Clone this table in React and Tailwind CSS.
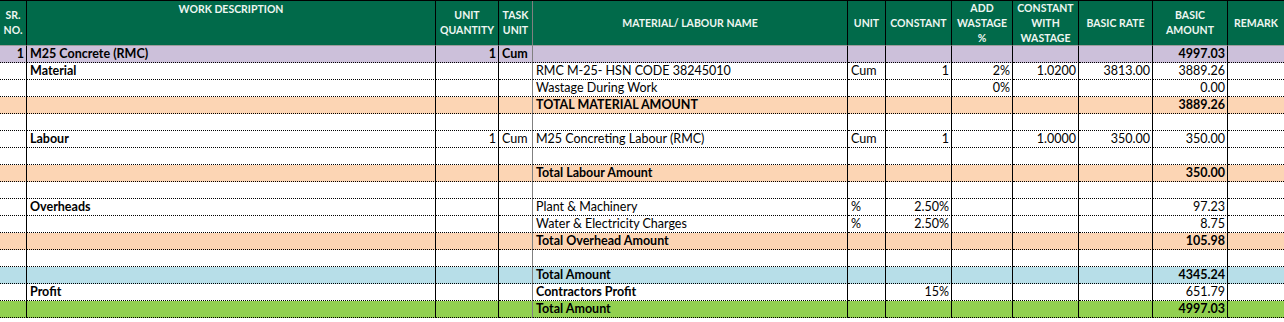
import React from "react";

// Column layout: widths taken from the sheet grid
const COLS = "grid-cols-[27px_409px_63px_34px_315px_38px_66px_61px_66px_74px_75px_1fr]";

// alignment per column
const ALIGN = ["r", "l", "r", "l", "l", "l", "r", "r", "r", "r", "r", "l"];

const HEADERS = [
  ["SR.", "NO."],
  ["WORK DESCRIPTION"],
  ["UNIT", "QUANTITY"],
  ["TASK", "UNIT"],
  ["MATERIAL/ LABOUR NAME"],
  ["UNIT"],
  ["CONSTANT"],
  ["ADD", "WASTAGE", "%"],
  ["CONSTANT", "WITH", "WASTAGE"],
  ["BASIC RATE"],
  ["BASIC", "AMOUNT"],
  ["REMARK"],
];

const BG = {
  purple: "bg-[#ccc0da]",
  white: "bg-white",
  peach: "bg-[#fcd5b4]",
  blue: "bg-[#b7dee8]",
  green: "bg-[#92d050]",
};

// each row: background, 12 cell texts, bold column indices
const ROWS = [
  { bg: "purple", c: ["1", "M25 Concrete (RMC)", "1", "Cum", "", "", "", "", "", "", "4997.03", ""], b: [0, 1, 2, 3, 10] },
  { bg: "white", c: ["", "Material", "", "", "RMC M-25- HSN CODE 38245010", "Cum", "1", "2%", "1.0200", "3813.00", "3889.26", ""], b: [1] },
  { bg: "white", c: ["", "", "", "", "Wastage During Work", "", "", "0%", "", "", "0.00", ""], b: [] },
  { bg: "peach", c: ["", "", "", "", "TOTAL MATERIAL AMOUNT", "", "", "", "", "", "3889.26", ""], b: [4, 10] },
  { bg: "white", c: Array(12).fill(""), b: [] },
  { bg: "white", c: ["", "Labour", "1", "Cum", "M25 Concreting Labour (RMC)", "Cum", "1", "", "1.0000", "350.00", "350.00", ""], b: [1] },
  { bg: "white", c: Array(12).fill(""), b: [] },
  { bg: "peach", c: ["", "", "", "", "Total Labour Amount", "", "", "", "", "", "350.00", ""], b: [4, 10] },
  { bg: "white", c: Array(12).fill(""), b: [] },
  { bg: "white", c: ["", "Overheads", "", "", "Plant & Machinery", "%", "2.50%", "", "", "", "97.23", ""], b: [1] },
  { bg: "white", c: ["", "", "", "", "Water & Electricity Charges", "%", "2.50%", "", "", "", "8.75", ""], b: [] },
  { bg: "peach", c: ["", "", "", "", "Total Overhead Amount", "", "", "", "", "", "105.98", ""], b: [4, 10] },
  { bg: "white", c: Array(12).fill(""), b: [] },
  { bg: "blue", c: ["", "", "", "", "Total Amount", "", "", "", "", "", "4345.24", ""], b: [4, 10] },
  { bg: "white", c: ["", "Profit", "", "", "Contractors Profit", "", "15%", "", "", "", "651.79", ""], b: [1, 4] },
  { bg: "green", c: ["", "", "", "", "Total Amount", "", "", "", "", "", "4997.03", ""], b: [4, 10] },
];

// right border per column; the one before the name column is grey
function rightBorder(i) {
  if (i === 11) return "";
  if (i === 3) return "border-r border-r-[#808080]";
  return "border-r border-r-black";
}

function HeaderCell({ lines, i }) {
  const top = i === 1;
  return (
    <div
      className={`h-[45px] border-b border-b-[#9c9c9c] ${rightBorder(i)} flex flex-col items-center ${
        top ? "justify-start pt-[1px]" : "justify-center"
      } text-center text-[10.5px] leading-[15px] font-bold text-[#eef6f1] overflow-hidden`}
    >
      {lines.map((l) => (
        <div key={l} className="whitespace-nowrap">
          {l}
        </div>
      ))}
    </div>
  );
}

function BodyCell({ text, i, bold }) {
  const right = ALIGN[i] === "r";
  return (
    <div
      className={`h-[17px] border-b border-b-black [border-bottom-style:dotted] ${rightBorder(i)} flex items-end pb-[1px] ${
        right ? "justify-end pr-[2px]" : "justify-start pl-[3px]"
      } text-[12.5px] leading-[15px] whitespace-nowrap overflow-hidden ${bold ? "font-bold" : ""}`}
    >
      {text}
    </div>
  );
}

export default function App() {
  return (
    <div className="w-[1284px] h-[322px] bg-white overflow-hidden font-['Lato','Liberation_Sans',sans-serif] text-black">
      <div className={`grid ${COLS} border-t border-t-black bg-[#016a4a]`}>
        {HEADERS.map((h, i) => (
          <HeaderCell key={i} lines={h} i={i} />
        ))}
      </div>
      {ROWS.map((r, ri) => (
        <div key={ri} className={`grid ${COLS} ${BG[r.bg]}`}>
          {r.c.map((t, i) => (
            <BodyCell key={i} text={t} i={i} bold={r.b.includes(i)} />
          ))}
        </div>
      ))}
    </div>
  );
}
